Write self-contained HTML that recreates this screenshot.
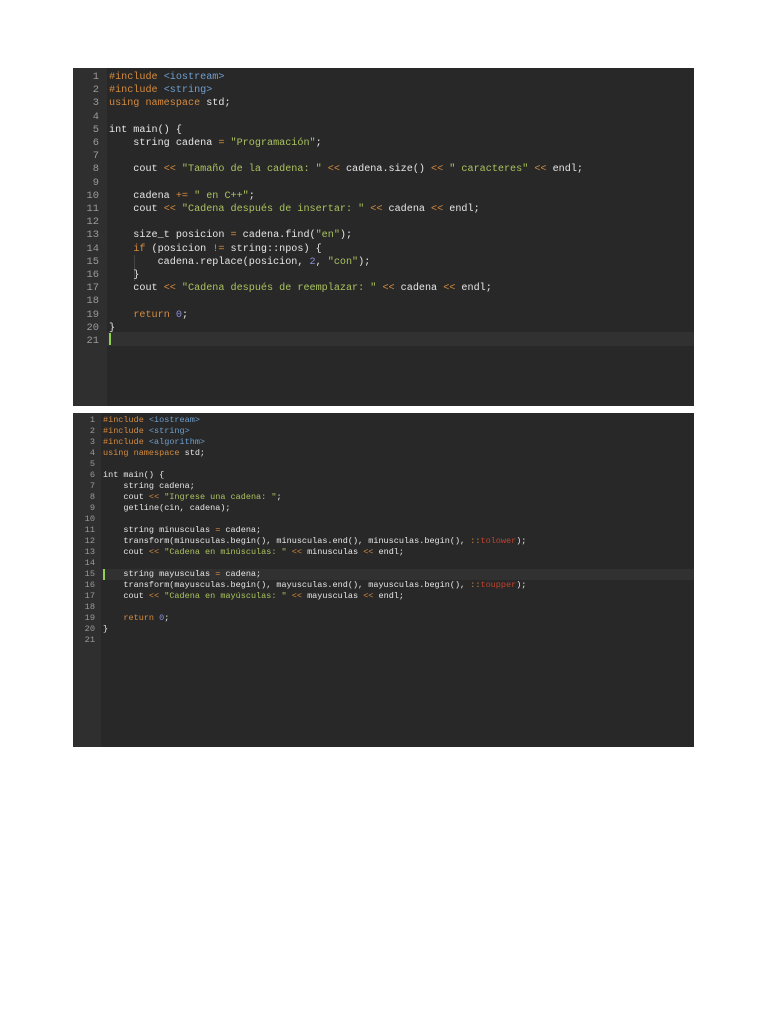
<!DOCTYPE html>
<html><head><meta charset="utf-8"><style>
html,body{margin:0;padding:0;background:#fff;width:768px;height:1024px;overflow:hidden}
.p{position:absolute;left:73px;width:621px;background:#282828}
.g{position:absolute;left:0;top:0;bottom:0;background:#2f2f2f}
.code{position:absolute;left:0;top:0;margin:0;font-family:"Liberation Mono",monospace;color:#e6e6e6;white-space:pre}
.ln{position:absolute;left:0;text-align:right;color:#9a9a9a;font-family:"Liberation Mono",monospace;white-space:pre;margin:0}
.k{color:#d58b3e}.s{color:#a9c35f}.b{color:#6f9fcf}.n{color:#8a8fd8}.r{color:#c0432d}
.hl{position:absolute;background:#313131}
</style></head><body>
<div class="p" style="top:68px;height:338px">
 <div class="g" style="width:34px"></div>
 <div class="hl" style="left:34px;right:0;top:264px;height:14px"></div>
 <div style="position:absolute;left:36px;top:265px;width:2px;height:12px;background:#8fd14f"></div>
 <div style="position:absolute;left:61px;top:187px;width:1px;height:26px;background:#444"></div>
 <pre class="ln" style="top:3px;width:26px;font-size:10.4px;line-height:13.2px">1
2
3
4
5
6
7
8
9
10
11
12
13
14
15
16
17
18
19
20
21</pre>
 <pre class="code" style="left:36px;top:3px;font-size:10.15px;line-height:13.2px"><span class="k">#include</span> <span class="b">&lt;iostream&gt;</span>
<span class="k">#include</span> <span class="b">&lt;string&gt;</span>
<span class="k">using namespace</span> std;

int main() {
    string cadena <span class="k">=</span> <span class="s">"Programación"</span>;

    cout <span class="k">&lt;&lt;</span> <span class="s">"Tamaño de la cadena: "</span> <span class="k">&lt;&lt;</span> cadena.size() <span class="k">&lt;&lt;</span> <span class="s">" caracteres"</span> <span class="k">&lt;&lt;</span> endl;

    cadena <span class="k">+=</span> <span class="s">" en C++"</span>;
    cout <span class="k">&lt;&lt;</span> <span class="s">"Cadena después de insertar: "</span> <span class="k">&lt;&lt;</span> cadena <span class="k">&lt;&lt;</span> endl;

    size_t posicion <span class="k">=</span> cadena.find(<span class="s">"en"</span>);
    <span class="k">if</span> (posicion <span class="k">!=</span> string::npos) {
        cadena.replace(posicion, <span class="n">2</span>, <span class="s">"con"</span>);
    }
    cout <span class="k">&lt;&lt;</span> <span class="s">"Cadena después de reemplazar: "</span> <span class="k">&lt;&lt;</span> cadena <span class="k">&lt;&lt;</span> endl;

    <span class="k">return</span> <span class="n">0</span>;
}
</pre>
</div>
<div class="p" style="top:413px;height:334px">
 <div class="g" style="width:28px"></div>
 <div class="hl" style="left:28px;right:0;top:156px;height:11px"></div>
 <div style="position:absolute;left:30px;top:156px;width:2px;height:11px;background:#8fd14f"></div>
 <pre class="ln" style="top:1.5px;width:22px;font-size:8.6px;line-height:11.05px">1
2
3
4
5
6
7
8
9
10
11
12
13
14
15
16
17
18
19
20
21</pre>
 <pre class="code" style="left:30px;top:1.5px;font-size:8.5px;line-height:11.05px"><span class="k">#include</span> <span class="b">&lt;iostream&gt;</span>
<span class="k">#include</span> <span class="b">&lt;string&gt;</span>
<span class="k">#include</span> <span class="b">&lt;algorithm&gt;</span>
<span class="k">using namespace</span> std;

int main() {
    string cadena;
    cout <span class="k">&lt;&lt;</span> <span class="s">"Ingrese una cadena: "</span>;
    getline(cin, cadena);

    string minusculas <span class="k">=</span> cadena;
    transform(minusculas.begin(), minusculas.end(), minusculas.begin(), <span class="k">::</span><span class="r">tolower</span>);
    cout <span class="k">&lt;&lt;</span> <span class="s">"Cadena en minúsculas: "</span> <span class="k">&lt;&lt;</span> minusculas <span class="k">&lt;&lt;</span> endl;

    string mayusculas <span class="k">=</span> cadena;
    transform(mayusculas.begin(), mayusculas.end(), mayusculas.begin(), <span class="k">::</span><span class="r">toupper</span>);
    cout <span class="k">&lt;&lt;</span> <span class="s">"Cadena en mayúsculas: "</span> <span class="k">&lt;&lt;</span> mayusculas <span class="k">&lt;&lt;</span> endl;

    <span class="k">return</span> <span class="n">0</span>;
}
</pre>
</div>
</body></html>
